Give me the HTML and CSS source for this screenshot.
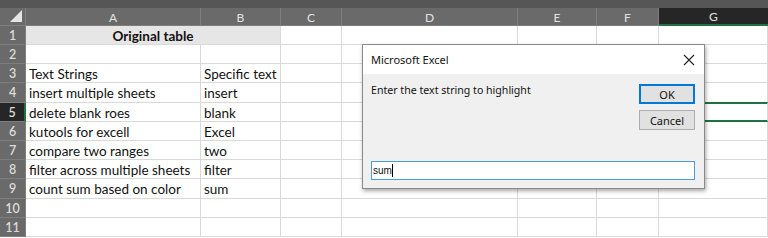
FILE: index.html
```html
<!DOCTYPE html>
<html>
<head>
<meta charset="utf-8">
<link rel="stylesheet" href="styles.css">
</head>
<body>
<div class="sheet">
  <div class="topbar"></div>
  <div class="grid">
    <div class="hd corner"><span class="tri"></span></div>
    <div class="hd col">A</div>
    <div class="hd col">B</div>
    <div class="hd col">C</div>
    <div class="hd col">D</div>
    <div class="hd col">E</div>
    <div class="hd col">F</div>
    <div class="hd col sel-col">G</div>

    <div class="hd row">1</div>
    <div class="c merged">Original table</div>
    <div class="c"></div><div class="c"></div><div class="c"></div><div class="c"></div><div class="c"></div>

    <div class="hd row">2</div>
    <div class="c"></div><div class="c"></div><div class="c"></div><div class="c"></div><div class="c"></div><div class="c"></div><div class="c"></div>

    <div class="hd row">3</div>
    <div class="c">Text Strings</div><div class="c">Specific text</div><div class="c"></div><div class="c"></div><div class="c"></div><div class="c"></div><div class="c"></div>

    <div class="hd row">4</div>
    <div class="c">insert multiple sheets</div><div class="c">insert</div><div class="c"></div><div class="c"></div><div class="c"></div><div class="c"></div><div class="c"></div>

    <div class="hd row sel-row">5</div>
    <div class="c">delete blank roes</div><div class="c">blank</div><div class="c"></div><div class="c"></div><div class="c"></div><div class="c"></div><div class="c active"></div>

    <div class="hd row">6</div>
    <div class="c">kutools for excell</div><div class="c">Excel</div><div class="c"></div><div class="c"></div><div class="c"></div><div class="c"></div><div class="c"></div>

    <div class="hd row">7</div>
    <div class="c">compare two ranges</div><div class="c">two</div><div class="c"></div><div class="c"></div><div class="c"></div><div class="c"></div><div class="c"></div>

    <div class="hd row">8</div>
    <div class="c">filter across multiple sheets</div><div class="c">filter</div><div class="c"></div><div class="c"></div><div class="c"></div><div class="c"></div><div class="c"></div>

    <div class="hd row">9</div>
    <div class="c">count sum based on color</div><div class="c">sum</div><div class="c"></div><div class="c"></div><div class="c"></div><div class="c"></div><div class="c"></div>

    <div class="hd row">10</div>
    <div class="c"></div><div class="c"></div><div class="c"></div><div class="c"></div><div class="c"></div><div class="c"></div><div class="c"></div>

    <div class="hd row">11</div>
    <div class="c"></div><div class="c"></div><div class="c"></div><div class="c"></div><div class="c"></div><div class="c"></div><div class="c"></div>
  </div>

  <div class="dialog">
    <div class="titlebar">
      <span class="title">Microsoft Excel</span>
      <svg class="close" width="12" height="12" viewBox="0 0 12 12"><path d="M1 1 L11 11 M11 1 L1 11" stroke="#222" stroke-width="1.1" fill="none"/></svg>
    </div>
    <div class="dbody">
      <div class="toprow">
        <div class="prompt">Enter the text string to highlight</div>
        <div class="buttons">
          <div class="btn ok">OK</div>
          <div class="btn">Cancel</div>
        </div>
      </div>
      <div class="input"><span class="val">sum</span><span class="caret"></span></div>
    </div>
  </div>
</div>
</body>
</html>
```

FILE: styles.css
```css
html, body {
  margin: 0;
  padding: 0;
  background: #ffffff;
}
.sheet {
  position: relative;
  width: 768px;
  height: 238px;
  overflow: hidden;
  font-family: Lato, "Liberation Sans", sans-serif;
}
.topbar {
  height: 8px;
  background: #565656;
}
.grid {
  display: grid;
  grid-template-columns: 26px 175px 80px 61px 176px 79px 62px 109px;
  grid-template-rows: 18px 19px 19px 19px 20px 19px 19px 19px 19px 20px 19px 19px;
}
.hd {
  box-sizing: border-box;
  background: #6a6a6a;
  color: #e2e2e2;
  font-size: 12px;
  display: flex;
  align-items: center;
  justify-content: center;
  border-right: 1px solid #7e7e7e;
  border-bottom: 1px solid #7e7e7e;
}
.corner {
  position: relative;
}
.tri {
  position: absolute;
  right: 3px;
  bottom: 3px;
  width: 0;
  height: 0;
  border-left: 12px solid transparent;
  border-bottom: 12px solid #e6e6e6;
}
.col {
  padding-top: 1px;
}
.sel-col {
  background: #262626;
  border-bottom: 2px solid #217346;
  border-right: none;
}
.row {
  font-size: 12.5px;
  font-weight: 600;
  color: #dcdcdc;
}
.sel-row {
  background: #262626;
  border-right: 2px solid #217346;
}
.c {
  box-sizing: border-box;
  border-right: 1px solid #d9d9d9;
  border-bottom: 1px solid #d9d9d9;
  font-size: 13.5px;
  color: #111;
  padding: 1px 3px 0 3px;
  display: flex;
  align-items: center;
  white-space: nowrap;
  overflow: hidden;
}
.merged {
  grid-column: span 2;
  background: #e7e6e6;
  justify-content: center;
  font-weight: bold;
}
.active {
  border-top: 2px solid #217346;
  border-bottom: 2px solid #217346;
  margin-top: -1px;
}
.dialog {
  position: absolute;
  left: 362px;
  top: 44px;
  width: 343px;
  height: 145px;
  box-sizing: border-box;
  border: 1px solid #8a8a8a;
  background: #f0f0f0;
  box-shadow: 1px 2px 4px rgba(0,0,0,0.35);
  font-family: "Noto Sans", "Liberation Sans", sans-serif;
  display: flex;
  flex-direction: column;
}
.titlebar {
  height: 29px;
  background: #ffffff;
  display: flex;
  align-items: center;
  justify-content: space-between;
  padding: 0 9px 0 8px;
}
.title {
  font-size: 11px;
  color: #111;
}
.close {
  display: block;
}
.dbody {
  flex: 1;
  padding: 10px 9px 8px 8px;
  display: flex;
  flex-direction: column;
}
.toprow {
  display: flex;
  justify-content: space-between;
}
.prompt {
  font-size: 10.6px;
  color: #111;
  margin-top: -1px;
}
.buttons {
  display: flex;
  flex-direction: column;
  gap: 6px;
}
.btn {
  box-sizing: border-box;
  width: 56px;
  height: 20px;
  background: #e1e1e1;
  border: 1px solid #adadad;
  font-size: 11px;
  color: #111;
  display: flex;
  align-items: center;
  justify-content: center;
}
.btn.ok {
  border: 2px solid #0078d7;
}
.input {
  margin-top: auto;
  box-sizing: border-box;
  height: 19px;
  background: #fff;
  border: 1px solid #4a9be0;
  display: flex;
  align-items: center;
  padding-left: 1px;
  font-family: "Liberation Sans", sans-serif;
  font-size: 10px;
  color: #111;
}
.caret {
  display: inline-block;
  width: 1px;
  height: 13px;
  background: #000;
  margin-left: 0;
}
```
